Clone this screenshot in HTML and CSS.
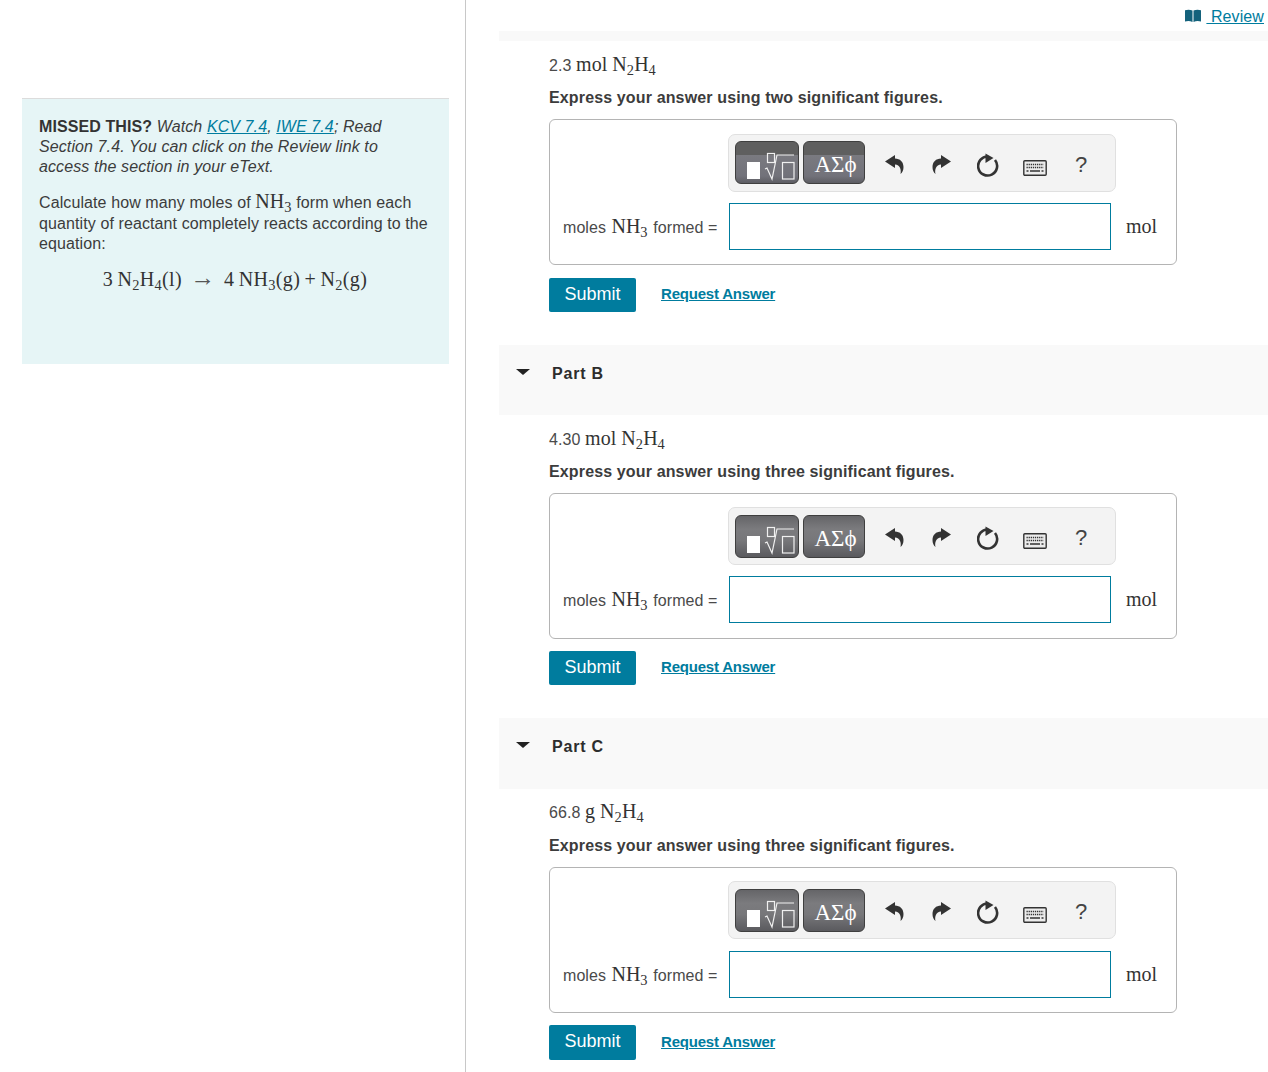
FILE: index.html
```html
<!DOCTYPE html>
<html lang="en">
<head>
<meta charset="utf-8">
<title>Part A, B, C</title>
<link rel="stylesheet" href="styles.css">
</head>
<body>
<svg class="defs" width="0" height="0" aria-hidden="true">
  <symbol id="i-undo" viewBox="0 0 20 22"><path d="M1 8.500 11 2v3.500c5 0 8.500 3.500 8.500 8.500 0 3-1 5.500-3 7 1-4-.5-9.500-5.500-9.500V15z"/></symbol>
  <symbol id="i-redo" viewBox="0 0 20 22"><path d="M19 8.500 9 2v3.500c-5 0-8.500 3.500-8.500 8.500 0 3 1 5.500 3 7-1-4 .5-9.500 5.500-9.500V15z"/></symbol>
  <symbol id="i-reset" viewBox="0 0 24 26"><path class="ring" d="M11 3.500A9.500 9.500 0 1 0 18 7"/><path d="M8.500.5 16.500 5 8.500 10z"/></symbol>
  <symbol id="i-kbd" viewBox="0 0 24 16"><rect class="kb" x=".8" y=".8" width="22.400" height="14.400" rx="1"/><path class="keys" d="M3.500 4.500h17M3.500 7.500h17"/><path class="bar" d="M3.500 11h2M7 11h10M18.500 11h2"/></symbol>
  <symbol id="i-tmpl" viewBox="0 0 62 41">
    <rect class="w" x="11" y="20" width="13" height="17"/>
    <rect class="o" x="31.500" y="11.500" width="7" height="9"/>
    <path class="o" d="M29 27l2-1 5 11 5-24h17"/>
    <rect class="o" x="46.500" y="20.500" width="11.500" height="16.500"/>
  </symbol>
</svg>
<div class="page">
  <aside class="left">
    <div class="hint">
      <p class="hint-p"><b class="missed">MISSED THIS?</b> <i>Watch <a href="#">KCV 7.4</a>, <a href="#">IWE 7.4</a>; Read Section 7.4. You can click on the Review link to access the section in your eText.</i></p>
      <p class="hint-p second">Calculate how many moles of <span class="m big">NH<sub>3</sub></span> form when each quantity of reactant completely reacts according to the equation:</p>
      <p class="equation m">3&#8201;N<sub>2</sub>H<sub>4</sub>(l) <span class="arrow">&rarr;</span> 4&#8201;NH<sub>3</sub>(g)&#8201;+&#8201;N<sub>2</sub>(g)</p>
    </div>
  </aside>
  <main class="right">
    <div class="review-row">
      <a class="review" href="#">
        <svg class="book" viewBox="0 0 16 13" aria-hidden="true"><path d="M0 1.200c2.500-.8 5-.8 7.500.3V13C5 11.900 2.500 11.900 0 12.600zM16 1.200c-2.500-.8-5-.8-7.500.3V13c2.500-1.100 5-1.100 7.500-.4z"/></svg>
        <span>&nbsp;Review</span>
      </a>
    </div>
    <div class="strip"></div>

    <section class="part part-a">
      <p class="qty">2.3 <span class="m big">mol N<sub>2</sub>H<sub>4</sub></span></p>
      <p class="express">Express your answer using two significant figures.</p>
      <div class="answer">
        <div class="toolbar">
          <span class="tbtn t1"><svg class="tmpl"><use href="#i-tmpl"/></svg></span>
          <span class="tbtn t2">&Alpha;&Sigma;&#981;</span>
          <svg class="ic undo"><use href="#i-undo"/></svg>
          <svg class="ic redo"><use href="#i-redo"/></svg>
          <svg class="ic reset"><use href="#i-reset"/></svg>
          <svg class="ic kbd"><use href="#i-kbd"/></svg>
          <span class="help">?</span>
        </div>
        <div class="entry">
          <span class="label">moles <span class="m big">NH<sub>3</sub></span> formed =</span>
          <span class="field"></span>
          <span class="unit m">mol</span>
        </div>
      </div>
      <div class="actions"><span class="submit">Submit</span><a class="request" href="#">Request Answer</a></div>
    </section>

    <section class="part part-b">
      <header class="part-head"><span class="tri"></span><h2>Part B</h2></header>
      <p class="qty">4.30 <span class="m big">mol N<sub>2</sub>H<sub>4</sub></span></p>
      <p class="express">Express your answer using three significant figures.</p>
      <div class="answer">
        <div class="toolbar">
          <span class="tbtn t1"><svg class="tmpl"><use href="#i-tmpl"/></svg></span>
          <span class="tbtn t2">&Alpha;&Sigma;&#981;</span>
          <svg class="ic undo"><use href="#i-undo"/></svg>
          <svg class="ic redo"><use href="#i-redo"/></svg>
          <svg class="ic reset"><use href="#i-reset"/></svg>
          <svg class="ic kbd"><use href="#i-kbd"/></svg>
          <span class="help">?</span>
        </div>
        <div class="entry">
          <span class="label">moles <span class="m big">NH<sub>3</sub></span> formed =</span>
          <span class="field"></span>
          <span class="unit m">mol</span>
        </div>
      </div>
      <div class="actions"><span class="submit">Submit</span><a class="request" href="#">Request Answer</a></div>
    </section>

    <section class="part part-c">
      <header class="part-head"><span class="tri"></span><h2>Part C</h2></header>
      <p class="qty">66.8 <span class="m big">g N<sub>2</sub>H<sub>4</sub></span></p>
      <p class="express">Express your answer using three significant figures.</p>
      <div class="answer">
        <div class="toolbar">
          <span class="tbtn t1"><svg class="tmpl"><use href="#i-tmpl"/></svg></span>
          <span class="tbtn t2">&Alpha;&Sigma;&#981;</span>
          <svg class="ic undo"><use href="#i-undo"/></svg>
          <svg class="ic redo"><use href="#i-redo"/></svg>
          <svg class="ic reset"><use href="#i-reset"/></svg>
          <svg class="ic kbd"><use href="#i-kbd"/></svg>
          <span class="help">?</span>
        </div>
        <div class="entry">
          <span class="label">moles <span class="m big">NH<sub>3</sub></span> formed =</span>
          <span class="field"></span>
          <span class="unit m">mol</span>
        </div>
      </div>
      <div class="actions"><span class="submit">Submit</span><a class="request" href="#">Request Answer</a></div>
    </section>
  </main>
</div>
</body>
</html>
```

FILE: styles.css
```css
* { box-sizing: border-box; }
html, body { margin: 0; height: 1072px; overflow: hidden; background: #fff; }
body { font-family: "Liberation Sans", Arial, sans-serif; font-size: 16px; color: #3c3c3c; }
.defs { position: absolute; }
.page { display: flex; height: 1072px; }

.left { width: 466px; flex: none; border-right: 1px solid #c8c8c8; padding: 98px 16px 0 22px; }
.hint { height: 266px; background: #e6f5f6; border-top: 1px solid #dcdcdc; padding: 18px 19px 0 17px; }
.hint-p { margin: 0; line-height: 20px; letter-spacing: .1px; }
.second { margin-top: 14px; line-height: 20.500px; }
.missed { color: #333; letter-spacing: .1px; }
.hint a, .review { color: #007c9e; }
.m { font-family: "Liberation Serif", "Times New Roman", serif; color: #333; }
.big { font-size: 20px; letter-spacing: 0; }
sub { font-size: 72%; line-height: 0; vertical-align: -.25em; letter-spacing: .3px; }
.equation { margin: 10px -3px 0 0; padding-right: 2px; text-align: center; font-size: 20px; line-height: 28px; letter-spacing: .35px; }
.arrow { display: inline-block; margin: 0 3px; font-size: 25px; line-height: 20px; color: #555; }

.right { flex: 1; min-width: 0; padding-left: 33px; }
.review-row { height: 31px; display: flex; justify-content: flex-end; padding-right: 4px; padding-top: 8px; }
.review { display: flex; align-items: center; height: 18px; line-height: 18px; text-decoration: underline; letter-spacing: .1px; }
.book { width: 16px; height: 13px; fill: #14627c; margin: 0 5px 3px 0; }
.strip { height: 10px; background: #f9f9f9; }

.part-a { height: 304px; }
.part-b { height: 373px; }
.part-c { height: 354px; }
.part-head { height: 70px; background: #f9f9f9; display: flex; align-items: flex-start; padding: 20px 0 0 17px; }
.part-c .part-head { height: 71px; }
.tri { width: 0; height: 0; margin-top: 4px; border-style: solid; border-width: 6.500px 7px 0; border-color: #222 transparent transparent; }
.part-head h2 { margin: 0 0 0 22px; font-size: 16px; line-height: 18px; color: #2d2d2d; letter-spacing: .8px; }
.qty { margin: 0; padding: 11px 0 0 50px; height: 46px; line-height: 24px; letter-spacing: .1px; color: #4a4a4a; }
.part-c .qty { padding-top: 10px; }
.express { margin: 0; padding: 1px 0 0 50px; height: 32px; line-height: 20px; font-weight: bold; color: #3c3c3c; letter-spacing: .14px; }

.answer { margin-left: 50px; width: 628px; height: 146px; border: 1px solid #b4b4b4; border-radius: 6px; }
.toolbar { margin: 14px 0 0 178px; width: 388px; height: 58px; background: #f3f3f3; border: 1px solid #e0e0e0; border-radius: 7px; display: flex; align-items: flex-start; position: relative; padding: 6px 0 0 6px; }
.part-b .toolbar, .part-c .toolbar { margin-top: 13px; padding-top: 7px; }
.tbtn { display: block; height: 43px; border: 1px solid #3f3f3f; border-radius: 6px; background: linear-gradient(#656568 0, #7b7b7e 32%, #77777a 60%, #5a5a5e 100%); color: #fff; }
.part-a .tbtn { background: linear-gradient(#5f5f5f 0, #5f5f5f 13px, #7a7a80 13px, #72727a 34px, #5d5d63 100%); }
.t1 { width: 64px; }
.t2 { width: 62px; margin-left: 4px; padding-left: 3px; font-family: "Liberation Serif", serif; font-size: 23px; line-height: 46px; text-align: center; }
.tmpl { display: block; width: 62px; height: 41px; }
.w { fill: #fff; }
.o { fill: none; stroke: #f0f0f0; stroke-width: 1.200; }
.ic { position: absolute; fill: #333; }
.undo { left: 155px; top: 18px; width: 20px; height: 22px; }
.redo { left: 203px; top: 18px; width: 20px; height: 22px; }
.reset { left: 248px; top: 18px; width: 24px; height: 26px; }
.ring { fill: none; stroke: #333; stroke-width: 2.600; }
.kbd { left: 294px; top: 25px; width: 24px; height: 16px; }
.kb { fill: #ececec; stroke: #333; stroke-width: 1.400; }
.keys { fill: none; stroke: #333; stroke-width: 1.700; stroke-dasharray: 1.300 .8; }
.bar { fill: none; stroke: #333; stroke-width: 1.500; }
.help { position: absolute; left: 346px; top: 18px; font-size: 22px; line-height: 24px; color: #444; }

.entry { display: flex; align-items: center; margin: 11px 0 0 13px; height: 47px; }
.part-c .entry { margin-top: 12px; }
.label { width: 166px; flex: none; white-space: nowrap; color: #4a4a4a; letter-spacing: .05px; }
.label .m { margin: 0 1px; }
.field { display: block; width: 382px; height: 47px; flex: none; background: #fff; border: 1px solid #007c9e; }
.unit { margin-left: 15px; font-size: 20px; }

.actions { display: flex; align-items: center; margin: 12px 0 0 50px; height: 34px; }
.part-a .actions { margin-top: 13px; }
.part-c .actions { height: 35px; }
.submit { display: block; width: 87px; height: 100%; background: #007c9e; border-radius: 2px; color: #fff; font-size: 18px; line-height: 32px; text-align: center; }
.request { margin: 0 0 3px 25px; font-size: 15px; font-weight: bold; color: #007c9e; text-decoration: underline; letter-spacing: -.2px; }
```
